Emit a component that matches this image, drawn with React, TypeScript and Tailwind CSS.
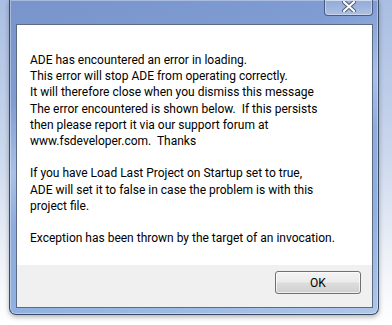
export default function App() {
  const font = { fontFamily: 'Roboto, "Noto Sans", sans-serif' };

  return (
    <div
      className="w-[392px] h-[325px] overflow-hidden pl-[9px] bg-[linear-gradient(to_bottom,#a9bee2_0%,#c9d6ec_45%,#eef2f8_80%,#ffffff_100%)]"
      style={font}
    >
      {/* Window frame (title bar cut off at the top) */}
      <div className="relative w-[370px] h-[315px] rounded-b-[7px] border-x border-b border-[#3a4a63] bg-[linear-gradient(165deg,#7894cb_0%,#809dd3_25%,#a9c1e8_42%,#8eacdd_55%,#8fb0e0_75%,#b0c7e8_100%)] shadow-[0_2px_5px_rgba(0,0,0,0.3),inset_0_0_0_1px_rgba(255,255,255,0.35)] pl-[6px] pr-[5px] pt-[24px] pb-[6px]">
        {/* Close button */}
        <div className="absolute right-[5px] top-0 w-[49px] h-[16px] rounded-b-[4px] border-x border-b border-[#4a5d80] bg-[linear-gradient(to_bottom,rgba(255,255,255,0.15),rgba(255,255,255,0.35))] shadow-[inset_0_0_0_1px_rgba(255,255,255,0.35)] flex items-center justify-center">
          <svg width="14" height="11" viewBox="0 0 14 11" className="-mt-[3px]">
            <path
              d="M2 1 L12 10 M12 1 L2 10"
              stroke="#4d5a70"
              strokeWidth="4"
              strokeLinecap="round"
            />
            <path
              d="M2 1 L12 10 M12 1 L2 10"
              stroke="#ffffff"
              strokeWidth="2.2"
              strokeLinecap="round"
            />
          </svg>
        </div>

        {/* Client area */}
        <div className="h-full border border-[#5c6b84] flex flex-col">
          <div className="flex-1 bg-white pl-[13px] pt-[27px] text-[12px] leading-[16.2px] text-black whitespace-pre">
            <p>ADE has encountered an error in loading.</p>
            <p>This error will stop ADE from operating correctly.</p>
            <p>It will therefore close when you dismiss this message</p>
            <p>The error encountered is shown below.  If this persists</p>
            <p>then please report it via our support forum at</p>
            <p>www.fsdeveloper.com.  Thanks</p>
            <p>&nbsp;</p>
            <p>If you have Load Last Project on Startup set to true,</p>
            <p>ADE will set it to false in case the problem is with this</p>
            <p>project file.</p>
            <p>&nbsp;</p>
            <p>Exception has been thrown by the target of an invocation.</p>
          </div>
          <div className="h-[42px] bg-[#f0f0f0] flex justify-end pr-[11px] pt-[6px]">
            <button className="w-[86px] h-[23px] rounded-[3px] border border-[#707070] bg-[linear-gradient(to_bottom,#f3f3f3_0%,#ebebeb_48%,#dddddd_52%,#cfcfcf_100%)] shadow-[inset_0_0_0_1px_rgba(255,255,255,0.7)] text-[12px] text-black flex items-center justify-center">
              OK
            </button>
          </div>
        </div>
      </div>
    </div>
  );
}
